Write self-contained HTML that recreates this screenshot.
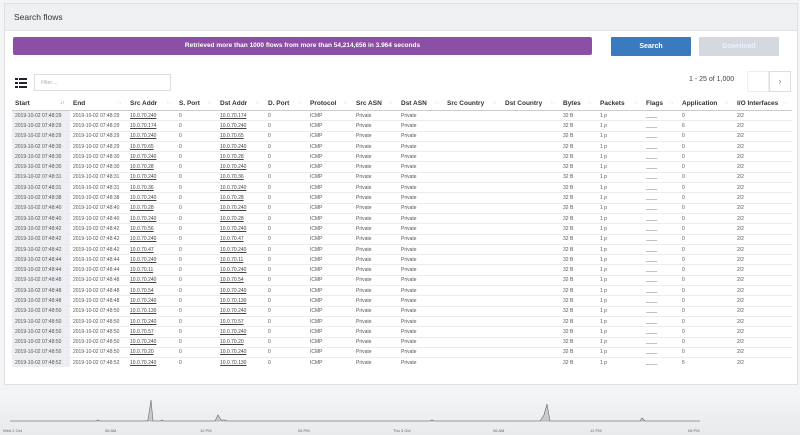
<!DOCTYPE html>
<html><head><meta charset="utf-8"><style>
body{margin:0;width:800px;height:435px;background:#f3f4f6;font-family:"Liberation Sans",Arial,sans-serif;overflow:hidden;position:relative}
.panel{position:absolute;left:4px;top:3px;width:792px;height:380px;background:#fff;border:1px solid #e0e0e0}
.hdr{position:absolute;left:0;top:0;width:792px;height:26px;background:#eef0f2;border-bottom:1px solid #e2e2e2}
.hdr span{position:absolute;left:9px;top:8px;font-size:8.5px;color:#333}
.banner{position:absolute;left:8px;top:33px;width:579px;height:18px;background:#8b4fa5;border-radius:2px;color:#fff;font-size:6.5px;font-weight:bold;text-align:center;line-height:18px}
.btn{position:absolute;top:33px;width:80px;height:19px;font-size:7px;font-weight:bold;text-align:center;line-height:19px;border-radius:1px}
.filter{position:absolute;left:29px;top:70px;width:137px;height:17px;border:1px solid #ddd;font-size:5px;color:#aaa;line-height:17px;padding-left:6px;box-sizing:border-box}
.pg{position:absolute;left:684px;top:72px;font-size:7px;color:#444}
table{position:absolute;left:12px;top:96px;width:780px;border-collapse:collapse;font-size:5px;color:#555}
th{font-size:6.5px;color:#333;text-align:left;height:14px;padding:0 0 0 3px;font-weight:bold;border-bottom:1px solid #ccc;white-space:nowrap;position:relative}
th i{position:absolute;right:5px;top:4px;font-style:normal;font-weight:normal;font-size:5px;color:#ccc}
td{height:9.3px;padding:0 0 0 3px;border-top:1px solid #ececec;white-space:nowrap}
td:first-child{background:#eceef1}
td.u{text-decoration:underline;color:#444}
.chart{position:absolute;left:0;top:390px;width:800px;height:45px;background:linear-gradient(#f4f5f6,#e8eaec)}
</style></head><body>
<div class="panel">
<div class="hdr"><span>Search flows</span></div>
<div class="banner">Retrieved more than 1000 flows from more than 54,214,656 in 3.964 seconds</div>
<div class="btn" style="left:606px;background:#3a7bbf;color:#fff">Search</div>
<div class="btn" style="left:694px;background:#d5d9df;color:#eef">Download</div>
<svg style="position:absolute;left:10px;top:74px" width="12" height="10"><rect x="0" y="0" width="3" height="2" fill="#223"/><rect x="4" y="0" width="8" height="2" fill="#223"/><rect x="0" y="4" width="3" height="2" fill="#223"/><rect x="4" y="4" width="8" height="2" fill="#223"/><rect x="0" y="8" width="3" height="2" fill="#223"/><rect x="4" y="8" width="8" height="2" fill="#223"/></svg>
<div class="filter">Filter ...</div>
<div class="pg">1 - 25 of 1,000</div>
<div style="position:absolute;left:742px;top:67px;width:20px;height:19px;border:1px solid #eee"></div>
<div style="position:absolute;left:764px;top:67px;width:20px;height:19px;border:1px solid #ddd;font-size:9px;color:#888;text-align:center;line-height:19px">›</div>
</div>
<table>
<tr><th style="width:55px">Start<i style="color:#666">↓↑</i></th><th style="width:54px">End<i>↑↓</i></th><th style="width:46px">Src Addr<i>↑↓</i></th><th style="width:38px">S. Port<i>↑↓</i></th><th style="width:45px">Dst Addr<i>↑↓</i></th><th style="width:39px">D. Port<i>↑↓</i></th><th style="width:43px">Protocol<i>↑↓</i></th><th style="width:42px">Src ASN<i>↑↓</i></th><th style="width:43px">Dst ASN<i>↑↓</i></th><th style="width:55px">Src Country<i>↑↓</i></th><th style="width:55px">Dst Country<i>↑↓</i></th><th style="width:34px">Bytes<i>↑↓</i></th><th style="width:43px">Packets<i>↑↓</i></th><th style="width:33px">Flags<i>↑↓</i></th><th style="width:52px">Application<i>↑↓</i></th><th>I/O Interfaces<i>↑↓</i></th></tr>
<tr><td>2019-10-02 07:48:29</td><td>2019-10-02 07:48:29</td><td class="u">10.0.70.240</td><td>0</td><td class="u">10.0.70.174</td><td>0</td><td>ICMP</td><td>Private</td><td>Private</td><td></td><td></td><td>32 B</td><td>1 p</td><td>____</td><td>0</td><td>2/2</td></tr>
<tr><td>2019-10-02 07:48:29</td><td>2019-10-02 07:48:29</td><td class="u">10.0.70.174</td><td>0</td><td class="u">10.0.70.240</td><td>0</td><td>ICMP</td><td>Private</td><td>Private</td><td></td><td></td><td>32 B</td><td>1 p</td><td>____</td><td>6</td><td>2/2</td></tr>
<tr><td>2019-10-02 07:48:29</td><td>2019-10-02 07:48:29</td><td class="u">10.0.70.240</td><td>0</td><td class="u">10.0.70.65</td><td>0</td><td>ICMP</td><td>Private</td><td>Private</td><td></td><td></td><td>32 B</td><td>1 p</td><td>____</td><td>0</td><td>2/2</td></tr>
<tr><td>2019-10-02 07:48:30</td><td>2019-10-02 07:48:29</td><td class="u">10.0.70.65</td><td>0</td><td class="u">10.0.70.240</td><td>0</td><td>ICMP</td><td>Private</td><td>Private</td><td></td><td></td><td>32 B</td><td>1 p</td><td>____</td><td>0</td><td>2/2</td></tr>
<tr><td>2019-10-02 07:48:30</td><td>2019-10-02 07:48:30</td><td class="u">10.0.70.240</td><td>0</td><td class="u">10.0.70.28</td><td>0</td><td>ICMP</td><td>Private</td><td>Private</td><td></td><td></td><td>32 B</td><td>1 p</td><td>____</td><td>0</td><td>2/2</td></tr>
<tr><td>2019-10-02 07:48:30</td><td>2019-10-02 07:48:30</td><td class="u">10.0.70.28</td><td>0</td><td class="u">10.0.70.240</td><td>0</td><td>ICMP</td><td>Private</td><td>Private</td><td></td><td></td><td>32 B</td><td>1 p</td><td>____</td><td>0</td><td>2/2</td></tr>
<tr><td>2019-10-02 07:48:31</td><td>2019-10-02 07:48:31</td><td class="u">10.0.70.240</td><td>0</td><td class="u">10.0.70.36</td><td>0</td><td>ICMP</td><td>Private</td><td>Private</td><td></td><td></td><td>32 B</td><td>1 p</td><td>____</td><td>0</td><td>2/2</td></tr>
<tr><td>2019-10-02 07:48:31</td><td>2019-10-02 07:48:31</td><td class="u">10.0.70.36</td><td>0</td><td class="u">10.0.70.240</td><td>0</td><td>ICMP</td><td>Private</td><td>Private</td><td></td><td></td><td>32 B</td><td>1 p</td><td>____</td><td>0</td><td>2/2</td></tr>
<tr><td>2019-10-02 07:48:38</td><td>2019-10-02 07:48:38</td><td class="u">10.0.70.240</td><td>0</td><td class="u">10.0.70.28</td><td>0</td><td>ICMP</td><td>Private</td><td>Private</td><td></td><td></td><td>32 B</td><td>1 p</td><td>____</td><td>0</td><td>2/2</td></tr>
<tr><td>2019-10-02 07:48:40</td><td>2019-10-02 07:48:40</td><td class="u">10.0.70.28</td><td>0</td><td class="u">10.0.70.240</td><td>0</td><td>ICMP</td><td>Private</td><td>Private</td><td></td><td></td><td>32 B</td><td>1 p</td><td>____</td><td>0</td><td>2/2</td></tr>
<tr><td>2019-10-02 07:48:40</td><td>2019-10-02 07:48:40</td><td class="u">10.0.70.240</td><td>0</td><td class="u">10.0.70.28</td><td>0</td><td>ICMP</td><td>Private</td><td>Private</td><td></td><td></td><td>32 B</td><td>1 p</td><td>____</td><td>0</td><td>2/2</td></tr>
<tr><td>2019-10-02 07:48:42</td><td>2019-10-02 07:48:42</td><td class="u">10.0.70.56</td><td>0</td><td class="u">10.0.70.240</td><td>0</td><td>ICMP</td><td>Private</td><td>Private</td><td></td><td></td><td>32 B</td><td>1 p</td><td>____</td><td>0</td><td>2/2</td></tr>
<tr><td>2019-10-02 07:48:42</td><td>2019-10-02 07:48:42</td><td class="u">10.0.70.240</td><td>0</td><td class="u">10.0.70.47</td><td>0</td><td>ICMP</td><td>Private</td><td>Private</td><td></td><td></td><td>32 B</td><td>1 p</td><td>____</td><td>0</td><td>2/2</td></tr>
<tr><td>2019-10-02 07:48:42</td><td>2019-10-02 07:48:42</td><td class="u">10.0.70.47</td><td>0</td><td class="u">10.0.70.240</td><td>0</td><td>ICMP</td><td>Private</td><td>Private</td><td></td><td></td><td>32 B</td><td>1 p</td><td>____</td><td>0</td><td>2/2</td></tr>
<tr><td>2019-10-02 07:48:44</td><td>2019-10-02 07:48:44</td><td class="u">10.0.70.240</td><td>0</td><td class="u">10.0.70.11</td><td>0</td><td>ICMP</td><td>Private</td><td>Private</td><td></td><td></td><td>32 B</td><td>1 p</td><td>____</td><td>0</td><td>2/2</td></tr>
<tr><td>2019-10-02 07:48:44</td><td>2019-10-02 07:48:44</td><td class="u">10.0.70.11</td><td>0</td><td class="u">10.0.70.240</td><td>0</td><td>ICMP</td><td>Private</td><td>Private</td><td></td><td></td><td>32 B</td><td>1 p</td><td>____</td><td>0</td><td>2/2</td></tr>
<tr><td>2019-10-02 07:48:48</td><td>2019-10-02 07:48:48</td><td class="u">10.0.70.240</td><td>0</td><td class="u">10.0.70.54</td><td>0</td><td>ICMP</td><td>Private</td><td>Private</td><td></td><td></td><td>32 B</td><td>1 p</td><td>____</td><td>0</td><td>2/2</td></tr>
<tr><td>2019-10-02 07:48:48</td><td>2019-10-02 07:48:48</td><td class="u">10.0.70.54</td><td>0</td><td class="u">10.0.70.240</td><td>0</td><td>ICMP</td><td>Private</td><td>Private</td><td></td><td></td><td>32 B</td><td>1 p</td><td>____</td><td>0</td><td>2/2</td></tr>
<tr><td>2019-10-02 07:48:48</td><td>2019-10-02 07:48:48</td><td class="u">10.0.70.240</td><td>0</td><td class="u">10.0.70.130</td><td>0</td><td>ICMP</td><td>Private</td><td>Private</td><td></td><td></td><td>32 B</td><td>1 p</td><td>____</td><td>0</td><td>2/2</td></tr>
<tr><td>2019-10-02 07:48:50</td><td>2019-10-02 07:48:50</td><td class="u">10.0.70.130</td><td>0</td><td class="u">10.0.70.240</td><td>0</td><td>ICMP</td><td>Private</td><td>Private</td><td></td><td></td><td>32 B</td><td>1 p</td><td>____</td><td>0</td><td>2/2</td></tr>
<tr><td>2019-10-02 07:48:50</td><td>2019-10-02 07:48:50</td><td class="u">10.0.70.240</td><td>0</td><td class="u">10.0.70.57</td><td>0</td><td>ICMP</td><td>Private</td><td>Private</td><td></td><td></td><td>32 B</td><td>1 p</td><td>____</td><td>0</td><td>2/2</td></tr>
<tr><td>2019-10-02 07:48:50</td><td>2019-10-02 07:48:50</td><td class="u">10.0.70.57</td><td>0</td><td class="u">10.0.70.240</td><td>0</td><td>ICMP</td><td>Private</td><td>Private</td><td></td><td></td><td>32 B</td><td>1 p</td><td>____</td><td>0</td><td>2/2</td></tr>
<tr><td>2019-10-02 07:48:50</td><td>2019-10-02 07:48:50</td><td class="u">10.0.70.240</td><td>0</td><td class="u">10.0.70.20</td><td>0</td><td>ICMP</td><td>Private</td><td>Private</td><td></td><td></td><td>32 B</td><td>1 p</td><td>____</td><td>0</td><td>2/2</td></tr>
<tr><td>2019-10-02 07:48:50</td><td>2019-10-02 07:48:50</td><td class="u">10.0.70.20</td><td>0</td><td class="u">10.0.70.240</td><td>0</td><td>ICMP</td><td>Private</td><td>Private</td><td></td><td></td><td>32 B</td><td>1 p</td><td>____</td><td>0</td><td>2/2</td></tr>
<tr><td>2019-10-02 07:48:52</td><td>2019-10-02 07:48:52</td><td class="u">10.0.70.240</td><td>0</td><td class="u">10.0.70.130</td><td>0</td><td>ICMP</td><td>Private</td><td>Private</td><td></td><td></td><td>32 B</td><td>1 p</td><td>____</td><td>5</td><td>2/2</td></tr>
</table>
<div class="chart">
<svg width="800" height="45" style="position:absolute;left:0;top:0">
<polyline fill="#c8ccd2" stroke="#666" stroke-width="0.6" points="10,31 96,31 98,30 100,31 146,31 148,30 151,10 153,31 160,31 162,30 164,31 215,31 218,25 221,30 225,30 228,31 430,31 432,30 434,31 540,31 544,25 547,14 550,31 556,31 640,31 642,28 645,31 700,31"/>
<line x1="10" y1="31" x2="700" y2="31" stroke="#888" stroke-width="0.6"/>
<g font-size="4" fill="#666" font-family="Liberation Sans,sans-serif">
<text x="3" y="42">Wed 2 Oct</text><text x="105" y="42">06 AM</text><text x="200" y="42">12 PM</text><text x="298" y="42">06 PM</text><text x="393" y="42">Thu 3 Oct</text><text x="493" y="42">06 AM</text><text x="590" y="42">12 PM</text><text x="688" y="42">06 PM</text></g>
</svg>
</div>
</body></html>
